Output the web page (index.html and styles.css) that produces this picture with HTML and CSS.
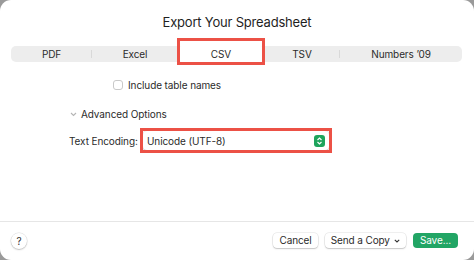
FILE: index.html
```html
<!DOCTYPE html>
<html>
<head>
    <title>Export Your Spreadsheet</title>
    <link rel="stylesheet" href="styles.css">
</head>
<body>
    <div class="dialog">
        <h1 class="title">Export Your Spreadsheet</h1>

        <div class="tabs">
            <div class="tab">PDF</div>
            <div class="tab">Excel</div>
            <div class="tab selected">CSV</div>
            <div class="tab">TSV</div>
            <div class="tab last">Numbers ’09</div>
        </div>

        <label class="check-row">
            <span class="checkbox"></span>
            <span>Include table names</span>
        </label>

        <div class="advanced">
            <svg class="disclosure" width="7" height="5" viewBox="0 0 7 5"><path d="M1 1l2.5 2.5L6 1" fill="none" stroke="#b5b5b5" stroke-width="1.1"/></svg>
            <span>Advanced Options</span>
        </div>

        <div class="encoding-row">
            <span class="encoding-label">Text Encoding:</span>
            <div class="popup">
                <span>Unicode (UTF-8)</span>
                <span class="stepper">
                    <svg width="11" height="12" viewBox="0 0 11 12"><rect width="11" height="12" rx="3" fill="#1ea45c"/><path d="M3.5 5l2-2 2 2M3.5 7l2 2 2-2" fill="none" stroke="#fff" stroke-width="1.2"/></svg>
                </span>
            </div>
        </div>

        <div class="spacer"></div>

        <div class="footer">
            <button class="help">?</button>
            <div class="actions">
                <button class="btn">Cancel</button>
                <button class="btn">Send a Copy
                    <svg width="6" height="4" viewBox="0 0 6 4"><path d="M0.8 0.8l2.2 2.2 2.2-2.2" fill="none" stroke="#333" stroke-width="1.1"/></svg>
                </button>
                <button class="btn primary">Save...</button>
            </div>
        </div>
    </div>
</body>
</html>
```

FILE: styles.css
```css
* {
    box-sizing: border-box;
}

body {
    margin: 0;
    width: 474px;
    height: 260px;
    background-color: #9a9a9a;
    font-family: Inter, "Liberation Sans", Arial, sans-serif;
    font-size: 10px;
    letter-spacing: -0.1px;
    color: #2b2b2b;
    overflow: hidden;
}

.dialog {
    width: 474px;
    height: 260px;
    background-color: #ffffff;
    border-radius: 11px;
    display: flex;
    flex-direction: column;
}

.title {
    margin: 0;
    padding-top: 14px;
    font-size: 13px;
    line-height: 16px;
    font-weight: 400;
    letter-spacing: -0.2px;
    text-align: center;
    color: #1f1f1f;
}

.tabs {
    margin: 16px 12px 0 11px;
    height: 16px;
    display: grid;
    grid-template-columns: 81px 86px 86px 76px 1fr;
    background-color: #ededed;
    border-radius: 5px;
}

.tab {
    position: relative;
    line-height: 16px;
    text-align: center;
    color: #2b2b2b;
}

.tab::before {
    content: "";
    position: absolute;
    right: 0;
    top: 4px;
    bottom: 4px;
    width: 1px;
    background-color: #d9d9d9;
}

.tab.last::before,
.tab.selected::before {
    display: none;
}

.tab.selected {
    background-color: #ffffff;
    border-radius: 4px;
}

.tab.selected::after {
    content: "";
    position: absolute;
    left: -1px;
    right: -1px;
    top: -8px;
    bottom: -3px;
    border: 3px solid #ec5146;
}

.check-row {
    display: flex;
    align-items: center;
    gap: 5px;
    margin: 16px 0 0 113px;
    height: 14px;
}

.checkbox {
    width: 10px;
    height: 10px;
    border: 1px solid #c9c9c9;
    border-radius: 3px;
    background-color: #ffffff;
}

.advanced {
    display: flex;
    align-items: center;
    gap: 4px;
    margin: 15px 0 0 70px;
    height: 14px;
}

.encoding-row {
    display: flex;
    align-items: center;
    margin: 10px 0 0 69px;
    height: 19px;
}

.encoding-label {
    width: 74px;
    flex-shrink: 0;
    white-space: nowrap;
}

.popup {
    position: relative;
    width: 186px;
    height: 19px;
    display: flex;
    align-items: center;
    justify-content: space-between;
    padding: 0 4px 0 4px;
    background-color: #ffffff;
    box-shadow: 0 0.5px 1.5px rgba(0, 0, 0, 0.25);
    border-radius: 4px;
}

.popup::after {
    content: "";
    position: absolute;
    left: -3px;
    right: -3px;
    top: -3px;
    bottom: -3px;
    border: 3px solid #ec5146;
}

.stepper svg {
    display: block;
}

.spacer {
    flex: 1;
}

.footer {
    height: 39px;
    border-top: 1px solid #e6e6e6;
    display: flex;
    justify-content: space-between;
    align-items: flex-start;
    padding: 11px 16px 0 11px;
}

.help {
    width: 16px;
    height: 16px;
    padding: 0;
    border: none;
    border-radius: 50%;
    background-color: #ffffff;
    box-shadow: 0 0 0 0.5px rgba(0, 0, 0, 0.12), 0 1px 1.5px rgba(0, 0, 0, 0.2);
    font-family: Inter, "Liberation Sans", Arial, sans-serif;
    font-size: 10px;
    color: #333;
}

.actions {
    display: flex;
    gap: 7px;
}

.btn {
    height: 15px;
    padding: 0 6px;
    border: none;
    border-radius: 4px;
    background-color: #ffffff;
    box-shadow: 0 0 0 0.5px rgba(0, 0, 0, 0.12), 0 1px 1.5px rgba(0, 0, 0, 0.18);
    font-family: Inter, "Liberation Sans", Arial, sans-serif;
    font-size: 10px;
    letter-spacing: -0.1px;
    line-height: 15px;
    color: #2b2b2b;
    display: flex;
    align-items: center;
    gap: 4px;
}

.btn.primary {
    background-color: #22a565;
    color: #ffffff;
    box-shadow: none;
    padding: 0 7px;
}
```
